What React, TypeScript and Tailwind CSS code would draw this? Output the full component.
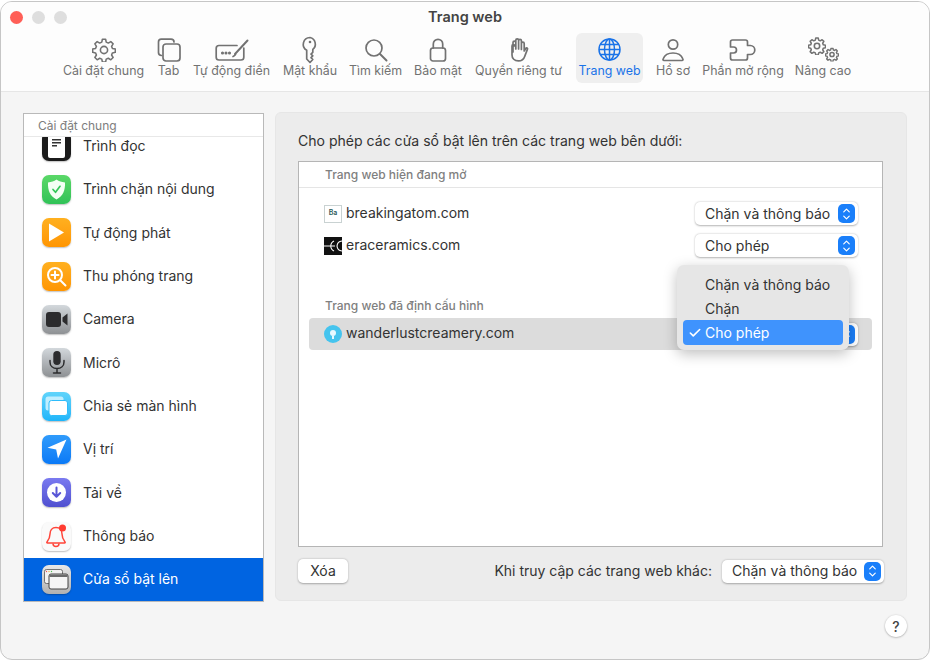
import { ChevronDown, ChevronUp, Check } from "lucide-react";
import type { ReactNode } from "react";

function Gear({ size = 24, x = 0, y = 0, sw = 1.6 }: { size?: number; x?: number; y?: number; sw?: number }) {
  return (
    <svg x={x} y={y} width={size} height={size} viewBox="0 0 24 24" fill="none" stroke="currentColor" strokeWidth={sw} strokeLinejoin="round">
      <path d="M10.300 1.800h3.400l.6 3 2.200 1 2.600-1.600 2.400 2.400-1.600 2.600.9 2.200 3 .6v3.400l-3 .6-.9 2.200 1.600 2.600-2.400 2.400-2.600-1.600-2.200.9-.6 3h-3.400l-.6-3-2.200-.9-2.600 1.600-2.400-2.400 1.600-2.600-.9-2.200-3-.6v-3.400l3-.6.9-2.200-1.600-2.600 2.400-2.400 2.600 1.600 2.200-1z" transform="scale(0.96) translate(.5 -.5)" />
      <circle cx="12" cy="12" r="3.600" />
    </svg>
  );
}

const stroke = { fill: "none", stroke: "currentColor", strokeWidth: 1.7, strokeLinecap: "round", strokeLinejoin: "round" } as const;

const toolbar: { label: string; w: string; icon: ReactNode }[] = [
  { label: "Cài đặt chung", w: "w-[95px]", icon: <Gear size={24} /> },
  {
    label: "Tab",
    w: "w-[35px]",
    icon: (
      <svg width="24" height="24" viewBox="0 0 24 24" {...stroke}>
        <path d="M4.500 17.500c-2 0-3-1-3-3V4c0-1.800 1-2.800 2.800-2.800H14c2 0 3 1 3 2.800" />
        <rect x="6" y="6" width="17" height="17" rx="3" />
      </svg>
    ),
  },
  {
    label: "Tự động điền",
    w: "w-[91px]",
    icon: (
      <svg width="34" height="24" viewBox="0 0 34 24" {...stroke}>
        <path d="M22 7.500H4c-1.800 0-2.800 1-2.800 2.800v9c0 1.800 1 2.700 2.800 2.700h22c1.800 0 2.800-.9 2.800-2.700V10" />
        <path d="M20 16 32.500 2.500" strokeWidth="2" />
        <path d="M18 18.500c1-.4 2-1.200 2.500-2" />
        <circle cx="7.500" cy="15" r=".7" fill="currentColor" />
        <circle cx="11" cy="15" r=".7" fill="currentColor" />
        <circle cx="14.500" cy="15" r=".7" fill="currentColor" />
      </svg>
    ),
  },
  {
    label: "Mật khẩu",
    w: "w-[66px]",
    icon: (
      <svg width="20" height="28" viewBox="0 0 20 28" {...stroke}>
        <path d="M10 1.500a6.800 6.800 0 0 0-3.300 12.700V23l3.300 3.500 2.800-3-1.800-1.800 1.800-1.800-1.800-1.800 1.800-1.800v-2.900A6.800 6.800 0 0 0 10 1.500z" />
        <circle cx="10" cy="6" r="1.300" fill="currentColor" stroke="none" />
      </svg>
    ),
  },
  {
    label: "Tìm kiếm",
    w: "w-[65px]",
    icon: (
      <svg width="24" height="24" viewBox="0 0 24 24" {...stroke}>
        <circle cx="10" cy="10" r="8" />
        <path d="m16 16 6.500 6.500" strokeWidth="2" />
      </svg>
    ),
  },
  {
    label: "Bảo mật",
    w: "w-[60px]",
    icon: (
      <svg width="18" height="24" viewBox="0 0 18 24" {...stroke}>
        <rect x="1.500" y="10" width="15" height="13" rx="2.500" />
        <path d="M4.300 10V6a4.700 4.700 0 0 1 9.400 0v4" />
      </svg>
    ),
  },
  {
    label: "Quyền riêng tư",
    w: "w-[101px]",
    icon: (
      <svg width="20" height="26" viewBox="0 0 20 26" {...stroke}>
        <path d="M5 15V5.500a1.400 1.400 0 0 1 2.800 0V12V3.200a1.400 1.400 0 0 1 2.800 0V12V3.800a1.400 1.400 0 0 1 2.800 0V12.500V6.500a1.400 1.400 0 0 1 2.800 0V14l1.500-2.500c.8-1.300 2.300-.5 1.700.9l-2.500 6.500c-1 3-3 5-6.500 5-4 0-6.400-2.400-6.400-6V9a1.300 1.300 0 0 1 2.600 0" transform="translate(-1 0)" />
      </svg>
    ),
  },
];

const toolbarAfter: { label: string; w: string; icon: ReactNode }[] = [
  {
    label: "Hồ sơ",
    w: "w-[48px]",
    icon: (
      <svg width="22" height="24" viewBox="0 0 22 24" {...stroke}>
        <circle cx="11" cy="6.500" r="4.700" />
        <path d="M2 22.500c-1 0-1.200-.8-.8-1.700C2.500 17.500 6.200 15 11 15s8.500 2.500 9.800 5.800c.4.900.2 1.700-.8 1.700z" />
      </svg>
    ),
  },
  {
    label: "Phần mở rộng",
    w: "w-[92px]",
    icon: (
      <svg width="28" height="24" viewBox="0 0 28 24" {...stroke}>
        <path d="M3.500 2h13c1.200 0 2 .8 2 2v3.500h2.800a4 4 0 0 1 0 9h-2.800V20c0 1.200-.8 2-2 2h-13c-1.200 0-2-.8-2-2v-5h3a3 3 0 0 0 0-6h-3V4c0-1.200.8-2 2-2z" />
      </svg>
    ),
  },
  {
    label: "Nâng cao",
    w: "w-[68px]",
    icon: (
      <svg width="31" height="25" viewBox="0 0 31 25">
        <Gear size={18} x={0} y={0} sw={2.1} />
        <Gear size={14} x={17} y={10.500} sw={2.6} />
      </svg>
    ),
  },
];

function ToolItem({ label, w, icon }: { label: string; w: string; icon: ReactNode }) {
  return (
    <div className={`${w} flex flex-col items-center text-[#727272]`}>
      <div className="h-[30px] pt-[3px] flex items-center justify-center">{icon}</div>
      <div className="text-[12.4px] leading-[16px] whitespace-nowrap">{label}</div>
    </div>
  );
}

function Stepper() {
  return (
    <span className="w-[17px] h-[19px] rounded-[5px] bg-[#1a7ffa] flex flex-col items-center justify-center text-white shrink-0">
      <ChevronUp size={11} strokeWidth={2.6} className="-mb-[2px]" />
      <ChevronDown size={11} strokeWidth={2.6} className="-mt-[2px]" />
    </span>
  );
}

function Select({ value, w }: { value?: string; w: string }) {
  return (
    <div className={`${w} h-[23px] bg-white rounded-[5px] shadow-[0_0.5px_2px_rgba(0,0,0,0.3)] flex items-center justify-between pl-[10px] pr-[3px] text-[14px] text-[#333]`}>
      <span className="whitespace-nowrap pb-px">{value}</span>
      <Stepper />
    </div>
  );
}

function AppIcon({ bg, children }: { bg: string; children: ReactNode }) {
  return (
    <div className={`${bg} w-[29px] h-[29px] rounded-[7px] flex items-center justify-center shrink-0 shadow-[0_1px_1.5px_rgba(0,0,0,0.25)]`}>
      {children}
    </div>
  );
}

const rows: { label: string; icon: ReactNode }[] = [
  {
    label: "Trình đọc",
    icon: (
      <AppIcon bg="bg-[#1b1b1b]">
        <svg width="19" height="25" viewBox="0 0 19 25">
          <rect x="1" y="0" width="17" height="24" rx="2" fill="#fff" />
          <path d="M5 5h9v1.500H5zM5 8h9v1.500H5zM5 11h5v1.500H5z" fill="#333" />
        </svg>
      </AppIcon>
    ),
  },
  {
    label: "Trình chặn nội dung",
    icon: (
      <AppIcon bg="bg-linear-to-b from-[#5ad868] to-[#2fc257]">
        <svg width="19" height="21" viewBox="0 0 19 21">
          <path d="M9.500 .5c2.500 1.800 5 2.600 8.500 3 .3 8-2 13.500-8.500 17-6.500-3.500-8.800-9-8.500-17 3.500-.4 6-1.200 8.500-3z" fill="#f3fff4" />
          <path d="m6 10.500 2.500 2.800 4.500-6" fill="none" stroke="#34c759" strokeWidth="1.700" strokeLinecap="round" strokeLinejoin="round" />
        </svg>
      </AppIcon>
    ),
  },
  {
    label: "Tự động phát",
    icon: (
      <AppIcon bg="bg-linear-to-b from-[#ffb01f] to-[#ff9500]">
        <svg width="17" height="19" viewBox="0 0 17 19">
          <path d="M1 .5 16 9.500 1 18.500z" fill="#fff" />
        </svg>
      </AppIcon>
    ),
  },
  {
    label: "Thu phóng trang",
    icon: (
      <AppIcon bg="bg-linear-to-b from-[#ffb01f] to-[#ff9500]">
        <svg width="21" height="21" viewBox="0 0 21 21" fill="none" stroke="#fff" strokeWidth="2" strokeLinecap="round">
          <circle cx="9" cy="9" r="7" />
          <path d="M9 5.500v7M5.500 9h7M14.500 14.500l5 5" />
        </svg>
      </AppIcon>
    ),
  },
  {
    label: "Camera",
    icon: (
      <AppIcon bg="bg-linear-to-b from-[#d3d8dc] to-[#8e9194]">
        <svg width="22" height="15" viewBox="0 0 22 15" fill="#2c2c2e">
          <rect x="0" y="0" width="15" height="15" rx="3" />
          <path d="m16.500 5.500 5-4v12l-5-4z" />
        </svg>
      </AppIcon>
    ),
  },
  {
    label: "Micrô",
    icon: (
      <AppIcon bg="bg-linear-to-b from-[#d3d8dc] to-[#8e9194]">
        <svg width="16" height="23" viewBox="0 0 16 23" fill="none" stroke="#2c2c2e" strokeWidth="1.500" strokeLinecap="round">
          <rect x="4.300" y="0" width="7.400" height="14" rx="3.700" fill="#2c2c2e" stroke="none" />
          <path d="M1 9.500v1.500c0 4 3 6.500 7 6.500s7-2.500 7-6.500V9.500M8 17.500v4M4.500 22h7" />
        </svg>
      </AppIcon>
    ),
  },
  {
    label: "Chia sẻ màn hình",
    icon: (
      <AppIcon bg="bg-linear-to-b from-[#5fd4fb] to-[#1cb5fa]">
        <svg width="23" height="20" viewBox="0 0 23 20">
          <rect x=".5" y=".5" width="18" height="14" rx="2.500" fill="#bfeeff" />
          <rect x="4" y="4.500" width="18.500" height="15" rx="2.500" fill="#fff" stroke="#2dbcfb" strokeWidth="1" />
        </svg>
      </AppIcon>
    ),
  },
  {
    label: "Vị trí",
    icon: (
      <AppIcon bg="bg-linear-to-b from-[#2f9bfb] to-[#0a79f6]">
        <svg width="20" height="20" viewBox="0 0 20 20">
          <path d="M19.500.5 11 19.500l-1.800-9-8.700-1.800z" fill="#fff" />
        </svg>
      </AppIcon>
    ),
  },
  {
    label: "Tải về",
    icon: (
      <AppIcon bg="bg-linear-to-b from-[#7a7af0] to-[#5050d0]">
        <svg width="19" height="19" viewBox="0 0 19 19">
          <circle cx="9.500" cy="9.500" r="9.500" fill="#fff" />
          <path d="M9.500 4.500v9M5.800 10l3.700 3.700 3.700-3.700" fill="none" stroke="#5856d6" strokeWidth="2" strokeLinecap="round" strokeLinejoin="round" />
        </svg>
      </AppIcon>
    ),
  },
  {
    label: "Thông báo",
    icon: (
      <AppIcon bg="bg-[#fafafa]">
        <svg width="23" height="24" viewBox="0 0 23 24" fill="none" stroke="#ff453a" strokeWidth="1.500" strokeLinejoin="round">
          <path d="M11 3.500c-4 0-6 3-6 6.500 0 4-1 5.500-3 8-.4.500-.2 1 .5 1h17c.7 0 .9-.5.5-1-2-2.500-3-4-3-8 0-3.500-2-6.500-6-6.500z" />
          <path d="M8 19.500c0 2 1.500 3 3 3s3-1 3-3" />
          <circle cx="17.500" cy="4" r="3.500" fill="#ff3b30" stroke="none" />
        </svg>
      </AppIcon>
    ),
  },
  {
    label: "Cửa sổ bật lên",
    icon: (
      <AppIcon bg="bg-linear-to-b from-[#e8e8e8] to-[#b0b0b0]">
        <svg width="25" height="21" viewBox="0 0 25 21">
          <rect x=".5" y=".5" width="18" height="14" rx="2" fill="#f2f2f2" stroke="#555" strokeWidth=".8" />
          <rect x="5" y="5" width="19" height="15" rx="2" fill="#f5f5f5" stroke="#444" strokeWidth="1" />
          <path d="M5.500 7a1.500 1.500 0 0 1 1.500-1.500h15A1.500 1.500 0 0 1 23.500 7v1h-18z" fill="#6b6b6b" />
          <circle cx="2.500" cy="2.500" r=".7" fill="#e55" />
          <circle cx="5" cy="2.500" r=".7" fill="#eb4" />
          <circle cx="7.500" cy="2.500" r=".7" fill="#5b5" />
        </svg>
      </AppIcon>
    ),
  },
];

export default function App() {
  return (
    <div className="w-[931px] h-[662px] bg-white font-['Inter','Liberation_Sans',sans-serif] pt-px">
      <div className="w-[930px] h-[659px] rounded-[12px] border border-[#c6c6c6] bg-[#f5f5f5] overflow-hidden flex flex-col">
        {/* toolbar */}
        <div className="h-[90px] shrink-0 bg-[#fdfdfd] border-b border-[#e6e6e6] relative">
          <div className="absolute left-[9px] top-[9px] flex gap-[9px]">
            <span className="w-[13px] h-[13px] rounded-full bg-[#ff5f57]" />
            <span className="w-[13px] h-[13px] rounded-full bg-[#dedede]" />
            <span className="w-[13px] h-[13px] rounded-full bg-[#dedede]" />
          </div>
          <div className="pt-[5px] text-center text-[14.500px] leading-[20px] font-semibold text-[#444]">Trang web</div>
          <div className="flex pl-[55px] pt-[6px] h-[58px]">
            {toolbar.map((t) => (
              <ToolItem key={t.label} {...t} />
            ))}
            <div className="w-[67px] ml-[7px] mr-[6px] h-[50px] rounded-[6px] bg-[#efefef] flex flex-col items-center text-[#1a73e8]">
              <div className="h-[30px] pt-[3px] flex items-center justify-center">
                <svg width="23" height="23" viewBox="0 0 23 23" fill="none" stroke="currentColor" strokeWidth="1.500">
                  <circle cx="11.500" cy="11.500" r="10.500" />
                  <ellipse cx="11.500" cy="11.500" rx="5" ry="10.500" />
                  <path d="M11.500 1v21M1 11.500h21M2.500 6.500h18M2.500 16.500h18" />
                </svg>
              </div>
              <div className="text-[12.400px] leading-[16px] whitespace-nowrap">Trang web</div>
            </div>
            {toolbarAfter.map((t) => (
              <ToolItem key={t.label} {...t} />
            ))}
          </div>
        </div>

        {/* body */}
        <div className="flex-1 relative pl-[22px] pt-[21px]">
          <div className="flex gap-[11px]">
            {/* sidebar */}
            <div className="w-[241px] h-[489px] bg-white border border-[#b9b9b9] flex flex-col overflow-hidden">
              <div className="h-[23px] shrink-0 pl-[14px] pt-[4px] text-[12px] leading-[16px] text-[#7d7d7d] border-b border-[#e8e8e8] bg-white z-10">
                Cài đặt chung
              </div>
              <div className="flex-1 overflow-hidden flex flex-col justify-end">
                {rows.map((r) => {
                  const selected = r.label === "Cửa sổ bật lên";
                  return (
                    <div
                      key={r.label}
                      className={`h-[43.33px] shrink-0 flex items-center gap-[12px] pl-[18px] text-[14px] ${selected ? "bg-[#0064e1] text-white" : "text-[#333]"}`}
                    >
                      {r.icon}
                      <span className="whitespace-nowrap pb-px">{r.label}</span>
                    </div>
                  );
                })}
              </div>
            </div>

            {/* panel */}
            <div className="w-[632px] h-[489px] bg-[#ececec] rounded-[6px] border border-[#e6e6e6] pl-[22px] pt-[18px] -mt-px">
              <div className="text-[14.050px] leading-[20px] text-[#333]">Cho phép các cửa sổ bật lên trên các trang web bên dưới:</div>
              <div className="relative mt-[10px] w-[585px] h-[386px] bg-white border border-[#b5b5b5]">
                <div className="h-[26px] pl-[26px] pt-[5px] text-[12px] leading-[16px] font-medium text-[#808080] border-b border-[#e5e5e5]">
                  Trang web hiện đang mở
                </div>
                <div className="pl-[25px] pr-[24px] pt-[14px] flex items-center justify-between h-[37px] text-[14px] text-[#333]">
                  <div className="flex items-center gap-[4px]">
                    <span className="w-[18px] h-[18px] border border-[#c9d2d2] flex items-center justify-center text-[7px] font-semibold text-[#2d5a5a]">Ba</span>
                    <span className="pb-[2px]">breakingatom.com</span>
                  </div>
                  <Select value="Chặn và thông báo" w="w-[163px]" />
                </div>
                <div className="pl-[25px] pr-[24px] mt-[9px] flex items-center justify-between h-[23px] text-[14px] text-[#333]">
                  <div className="flex items-center gap-[4px]">
                    <span className="w-[18px] h-[18px] bg-[#111] block overflow-hidden">
                      <svg width="18" height="18" viewBox="0 0 18 18" fill="none" stroke="#fff" strokeWidth="1.100">
                        <path d="M10 4a5.500 5.500 0 0 0 0 10M0 9h11M18 4a5.500 5.500 0 0 0-5 5 5.500 5.500 0 0 0 5 5" />
                      </svg>
                    </span>
                    <span className="pb-[2px]">eraceramics.com</span>
                  </div>
                  <Select value="Cho phép" w="w-[163px]" />
                </div>
                <div className="mt-[41px] pl-[26px] text-[12px] leading-[16px] font-medium text-[#808080]">Trang web đã định cấu hình</div>
                <div className="mt-[4px] mx-[10px] h-[32px] rounded-[4px] bg-[#dcdcdc] pl-[15px] pr-[14px] flex items-center justify-between text-[14px] text-[#333]">
                  <div className="flex items-center gap-[4px]">
                    <span className="w-[18px] h-[18px] rounded-full bg-[#45c4ee] flex flex-col items-center justify-center">
                      <span className="w-[6px] h-[6px] rounded-full bg-[#e6f9ff]" />
                      <span className="w-[2px] h-[3px] bg-[#e6f9ff]" />
                    </span>
                    <span className="pb-[3px]">wanderlustcreamery.com</span>
                  </div>
                  <Select w="w-[163px]" />
                </div>

                {/* open popup menu */}
                <div className="absolute left-[378px] top-[103px] w-[172px] h-[85px] rounded-[7px] bg-[#e6e6e6] shadow-[0_4px_14px_rgba(0,0,0,0.25)] px-[6px] pt-[7px] text-[14px] text-[#333]">
                  <div className="h-[24px] pl-[22px] flex items-center whitespace-nowrap">Chặn và thông báo</div>
                  <div className="h-[24px] pl-[22px] flex items-center">Chặn</div>
                  <div className="h-[25px] w-[160px] rounded-[4px] bg-[#3f93fd] text-white flex items-center">
                    <Check size={14} strokeWidth={2.8} className="ml-[5px] mr-[3px]" />
                    <span>Cho phép</span>
                  </div>
                </div>
              </div>
              <div className="mt-[12px] w-[586px] flex items-center justify-between">
                <div className="w-[50px] h-[24px] bg-white rounded-[5px] shadow-[0_0.5px_2px_rgba(0,0,0,0.3)] flex items-center justify-center text-[14px] text-[#333] pb-[2px]">Xóa</div>
                <div className="flex items-center gap-[10px] text-[14px] text-[#333]">
                  <span className="pb-[2px]">Khi truy cập các trang web khác:</span>
                  <Select value="Chặn và thông báo" w="w-[162px]" />
                </div>
              </div>
            </div>
          </div>
          <div className="absolute right-[22px] bottom-[22px] w-[22px] h-[22px] rounded-full bg-white shadow-[0_0.5px_2px_rgba(0,0,0,0.35)] flex items-center justify-center text-[14px] font-medium text-[#444]">?</div>
        </div>
      </div>
    </div>
  );
}
